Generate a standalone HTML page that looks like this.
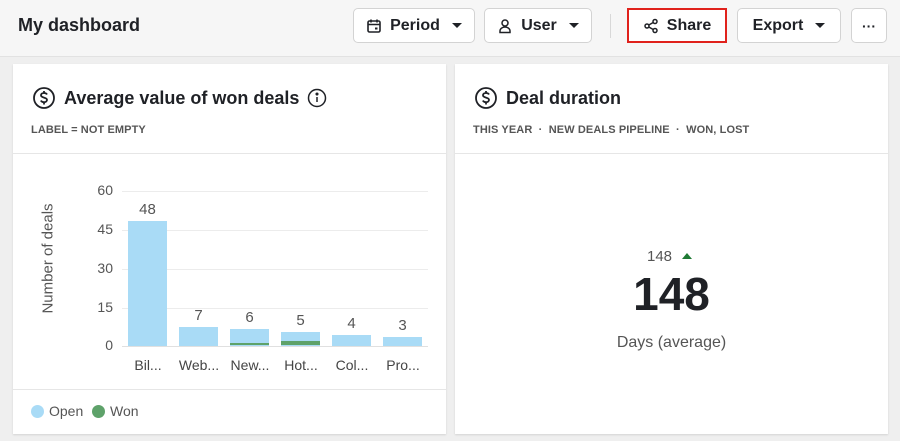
<!DOCTYPE html>
<html><head><style>
*{box-sizing:border-box;margin:0;padding:0}
body{width:900px;height:441px;background:#efefef;font-family:"Liberation Sans",sans-serif;position:relative;overflow:hidden;color:#1f2126}
.top{position:absolute;left:0;top:0;width:900px;height:57px;background:#f6f6f6;border-bottom:1px solid #e2e2e2}
.title{position:absolute;left:18px;top:15px;font-size:18px;font-weight:bold}
.btn{position:absolute;top:8px;height:35px;background:#fff;border:1px solid #d3d3d3;border-radius:5px;font-size:16px;font-weight:bold;display:flex;align-items:center;justify-content:center;gap:8px}
.caret{width:0;height:0;border-left:5px solid transparent;border-right:5px solid transparent;border-top:5px solid #1f2126;margin-left:4px}
.card{position:absolute;top:64px;width:433px;height:370px;background:#fff;box-shadow:0 1px 2px rgba(0,0,0,.12)}
.ch{font-size:18px;font-weight:bold;position:absolute;top:22px;display:flex;align-items:center;gap:8px}
.sub{position:absolute;top:60px;font-size:11px;font-weight:bold;color:#555;letter-spacing:.1px}
.sep{position:absolute;left:0;right:0;top:89px;border-top:1px solid #e6e6e6}
.abs{position:absolute}
.yl{position:absolute;font-size:14px;color:#555;width:30px;text-align:right}
.grid{position:absolute;left:109px;width:306px;border-top:1px solid #ececec}
.bar{position:absolute;width:39px;background:#a9dbf6}
.v{position:absolute;font-size:15px;color:#555;width:39px;text-align:center}
.xl{position:absolute;font-size:14px;color:#444;width:50px;text-align:center;top:293px}
</style></head><body>
<div class="top"></div>
<div class="title">My dashboard</div>
<div class="btn" style="left:353px;width:122px"><svg width="16" height="16" viewBox="0 0 16 16" fill="none" stroke="#1f2126" stroke-width="1.6"><rect x="2" y="3" width="12" height="11" rx="1.5"/><path d="M2 6.5h12M5 1.5v3M11 1.5v3"/><rect x="9" y="9.5" width="2.5" height="2" fill="#1f2126" stroke="none"/></svg>Period<span class="caret"></span></div>
<div class="btn" style="left:484px;width:108px"><svg width="16" height="16" viewBox="0 0 16 16" fill="none" stroke="#1f2126" stroke-width="1.5"><circle cx="8" cy="5" r="3"/><path d="M3 14.5v-1.5a5 4 0 0 1 10 0v1.5z"/></svg>User<span class="caret"></span></div>
<div class="abs" style="left:610px;top:14px;width:1px;height:24px;background:#d8d8d8"></div>
<div class="btn" style="left:627px;width:100px;border:2px solid #e0221c;border-radius:0"><svg width="16" height="16" viewBox="0 0 16 16" fill="none" stroke="#1f2126" stroke-width="1.5"><circle cx="12" cy="3.5" r="2"/><circle cx="4" cy="8" r="2"/><circle cx="12" cy="12.5" r="2"/><path d="M5.8 7l4.4-2.5M5.8 9l4.4 2.5"/></svg>Share</div>
<div class="btn" style="left:737px;width:104px">Export<span class="caret"></span></div>
<div class="btn" style="left:851px;width:36px;font-size:14px">···</div>

<div class="card" style="left:13px">
<div class="ch" style="left:19px"><svg width="24" height="24" viewBox="0 0 24 24" fill="none" stroke="#1f2126" stroke-width="1.8"><circle cx="12" cy="12" r="10"/><path d="M15 8.5c-.5-1-1.6-1.5-3-1.5-1.8 0-3 .9-3 2.3 0 3 6 1.6 6 4.6 0 1.4-1.2 2.3-3 2.3-1.5 0-2.6-.6-3.1-1.7M12 5v2M12 16v2.5"/></svg>Average value of won deals<svg width="20" height="20" viewBox="0 0 20 20" fill="none" stroke="#1f2126" stroke-width="1.5"><circle cx="10" cy="10" r="8.5"/><path d="M10 9v5"/><circle cx="10" cy="6" r=".8" fill="#1f2126"/></svg></div>
<div class="sub" style="left:18px">LABEL = NOT EMPTY</div>
<div class="sep"></div>
<div class="abs" style="left:-25px;top:186px;transform:rotate(-90deg);font-size:15px;color:#555;width:120px;text-align:center;white-space:nowrap">Number of deals</div>
<div class="yl" style="left:70px;top:118px">60</div>
<div class="yl" style="left:70px;top:157px">45</div>
<div class="yl" style="left:70px;top:196px">30</div>
<div class="yl" style="left:70px;top:235px">15</div>
<div class="yl" style="left:70px;top:273px">0</div>
<div class="grid" style="top:127px"></div><div class="grid" style="top:166px"></div><div class="grid" style="top:205px"></div><div class="grid" style="top:244px"></div><div class="grid" style="top:282px;border-color:#e0e0e0"></div>
<div class="bar" style="left:115px;top:157px;height:125px"></div><div class="v" style="left:115px;top:137px">48</div>
<div class="bar" style="left:166px;top:263px;height:19px"></div><div class="v" style="left:166px;top:243px">7</div>
<div class="bar" style="left:217px;top:265px;height:17px"></div><div class="abs" style="left:217px;top:279px;width:39px;height:2px;background:#5ea26a"></div><div class="v" style="left:217px;top:245px">6</div>
<div class="bar" style="left:268px;top:268px;height:14px"></div><div class="abs" style="left:268px;top:277px;width:39px;height:4px;background:#5ea26a"></div><div class="v" style="left:268px;top:248px">5</div>
<div class="bar" style="left:319px;top:271px;height:11px"></div><div class="v" style="left:319px;top:251px">4</div>
<div class="bar" style="left:370px;top:273px;height:9px"></div><div class="v" style="left:370px;top:253px">3</div>
<div class="xl" style="left:110px">Bil...</div><div class="xl" style="left:161px">Web...</div><div class="xl" style="left:212px">New...</div><div class="xl" style="left:263px">Hot...</div><div class="xl" style="left:314px">Col...</div><div class="xl" style="left:365px">Pro...</div>
<div class="sep" style="top:325px"></div>
<div class="abs" style="left:18px;top:341px;width:13px;height:13px;border-radius:50%;background:#a9dbf6"></div>
<div class="abs" style="left:36px;top:339px;font-size:14px;color:#555">Open</div>
<div class="abs" style="left:79px;top:341px;width:13px;height:13px;border-radius:50%;background:#5ea26a"></div>
<div class="abs" style="left:97px;top:339px;font-size:14px;color:#555">Won</div>
</div>

<div class="card" style="left:455px">
<div class="ch" style="left:19px"><svg width="24" height="24" viewBox="0 0 24 24" fill="none" stroke="#1f2126" stroke-width="1.8"><circle cx="12" cy="12" r="10"/><path d="M15 8.5c-.5-1-1.6-1.5-3-1.5-1.8 0-3 .9-3 2.3 0 3 6 1.6 6 4.6 0 1.4-1.2 2.3-3 2.3-1.5 0-2.6-.6-3.1-1.7M12 5v2M12 16v2.5"/></svg>Deal duration</div>
<div class="sub" style="left:18px">THIS YEAR &nbsp;·&nbsp; NEW DEALS PIPELINE &nbsp;·&nbsp; WON, LOST</div>
<div class="sep"></div>
<div class="abs" style="left:192px;top:184px;font-size:15px;color:#555">148</div>
<div class="abs" style="left:227px;top:189px;width:0;height:0;border-left:5px solid transparent;border-right:5px solid transparent;border-bottom:6px solid #1f7a34"></div>
<div class="abs" style="left:0;width:433px;text-align:center;top:203px;font-size:46px;font-weight:bold;color:#1f2126">148</div>
<div class="abs" style="left:0;width:433px;text-align:center;top:270px;font-size:16px;color:#555">Days (average)</div>
</div>
</body></html>
